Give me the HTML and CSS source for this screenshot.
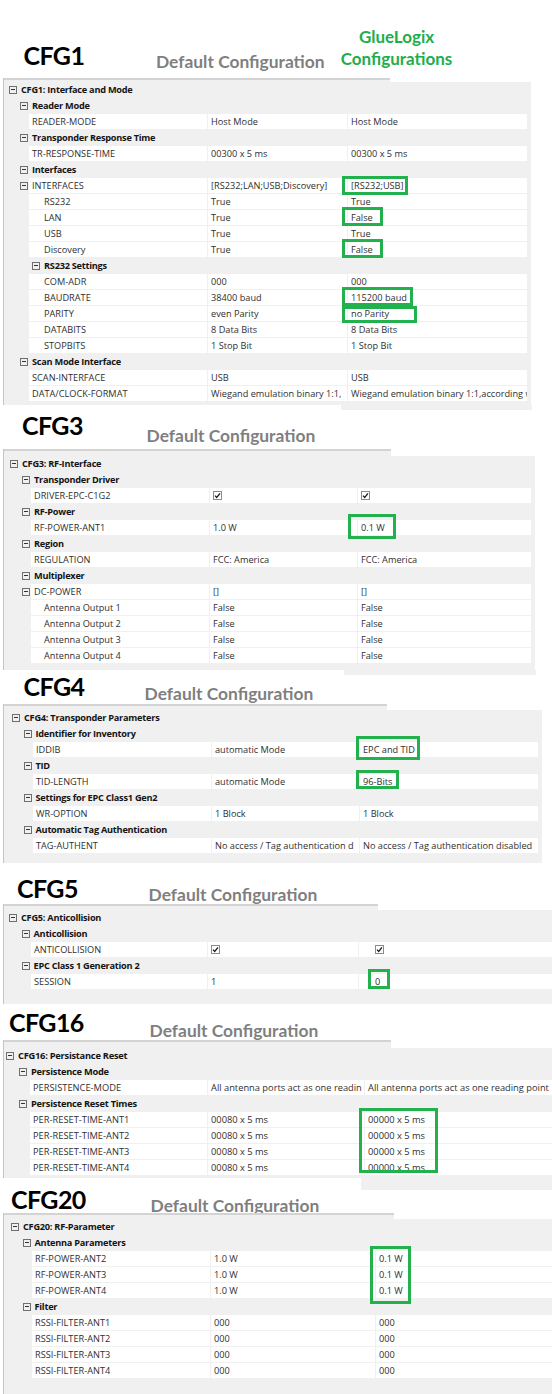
FILE: index.html
```html
<!DOCTYPE html>
<html lang="en">
<head>
<meta charset="utf-8">
<title>CFG comparison</title>
<link rel="stylesheet" href="styles.css">
</head>
<body>

<section class="sec s1">
  <header class="head">
    <h2 class="title">CFG1</h2>
    <p class="sub">Default Configuration</p>
    <p class="glue">GlueLogix<br>Configurations</p>
  </header>
  <div class="panel t1">
    <div class="ptop"><i></i></div>
    <div class="pbody">
      <div class="cat l0"><i class="ex"></i>CFG1: Interface and Mode</div>
      <div class="cat l1"><i class="ex"></i>Reader Mode</div>
      <div class="row"><span class="g"></span><span class="c">READER-MODE</span><span class="c">Host Mode</span><span class="c">Host Mode</span></div>
      <div class="cat l1"><i class="ex"></i>Transponder Response Time</div>
      <div class="row"><span class="g"></span><span class="c">TR-RESPONSE-TIME</span><span class="c">00300 x 5 ms</span><span class="c">00300 x 5 ms</span></div>
      <div class="cat l1"><i class="ex"></i>Interfaces</div>
      <div class="row"><span class="g"><i class="ex"></i></span><span class="c">INTERFACES</span><span class="c">[RS232;LAN;USB;Discovery]</span><span class="c">[RS232;USB]</span><b class="hl b-if"></b></div>
      <div class="row"><span class="g"></span><span class="c in">RS232</span><span class="c">True</span><span class="c">True</span></div>
      <div class="row"><span class="g"></span><span class="c in">LAN</span><span class="c">True</span><span class="c">False</span><b class="hl b-lan"></b></div>
      <div class="row"><span class="g"></span><span class="c in">USB</span><span class="c">True</span><span class="c">True</span></div>
      <div class="row"><span class="g"></span><span class="c in">Discovery</span><span class="c">True</span><span class="c">False</span><b class="hl b-disc"></b></div>
      <div class="cat l2"><i class="ex"></i>RS232 Settings</div>
      <div class="row"><span class="g"></span><span class="c in">COM-ADR</span><span class="c">000</span><span class="c">000</span></div>
      <div class="row"><span class="g"></span><span class="c in">BAUDRATE</span><span class="c">38400 baud</span><span class="c">115200 baud</span><b class="hl b-baud"></b></div>
      <div class="row"><span class="g"></span><span class="c in">PARITY</span><span class="c">even Parity</span><span class="c">no Parity</span><b class="hl b-par"></b></div>
      <div class="row"><span class="g"></span><span class="c in">DATABITS</span><span class="c">8 Data Bits</span><span class="c">8 Data Bits</span></div>
      <div class="row"><span class="g"></span><span class="c in">STOPBITS</span><span class="c">1 Stop Bit</span><span class="c">1 Stop Bit</span></div>
      <div class="cat l1"><i class="ex"></i>Scan Mode Interface</div>
      <div class="row"><span class="g"></span><span class="c">SCAN-INTERFACE</span><span class="c">USB</span><span class="c">USB</span></div>
      <div class="row"><span class="g"></span><span class="c">DATA/CLOCK-FORMAT</span><span class="c">Wiegand emulation binary 1:1,</span><span class="c">Wiegand emulation binary 1:1,according w</span></div>
    </div>
  </div>
</section>

<section class="sec s3">
  <header class="head">
    <h2 class="title">CFG3</h2>
    <p class="sub">Default Configuration</p>
  </header>
  <div class="panel t3">
    <div class="ptop"><i></i></div>
    <div class="pbody">
      <div class="cat l0"><i class="ex"></i>CFG3: RF-Interface</div>
      <div class="cat l1"><i class="ex"></i>Transponder Driver</div>
      <div class="row"><span class="g"></span><span class="c">DRIVER-EPC-C1G2</span><span class="c cb"><svg class="chk" width="9" height="9" viewBox="0 0 9 9"><rect x="0.5" y="0.5" width="8" height="8" fill="#fff" stroke="#8a8a8a"/><path d="M2 4.6 3.7 6.4 7 2.4" fill="none" stroke="#1a1a1a" stroke-width="1.3"/></svg></span><span class="c cb"><svg class="chk" width="9" height="9" viewBox="0 0 9 9"><rect x="0.5" y="0.5" width="8" height="8" fill="#fff" stroke="#8a8a8a"/><path d="M2 4.6 3.7 6.4 7 2.4" fill="none" stroke="#1a1a1a" stroke-width="1.3"/></svg></span></div>
      <div class="cat l1"><i class="ex"></i>RF-Power</div>
      <div class="row"><span class="g"></span><span class="c">RF-POWER-ANT1</span><span class="c">1.0 W</span><span class="c">0.1 W</span><b class="hl b-rf1"></b></div>
      <div class="cat l1"><i class="ex"></i>Region</div>
      <div class="row"><span class="g"></span><span class="c">REGULATION</span><span class="c">FCC: America</span><span class="c">FCC: America</span></div>
      <div class="cat l1"><i class="ex"></i>Multiplexer</div>
      <div class="row"><span class="g"><i class="ex"></i></span><span class="c">DC-POWER</span><span class="c">[]</span><span class="c">[]</span></div>
      <div class="row"><span class="g"></span><span class="c in">Antenna Output 1</span><span class="c">False</span><span class="c">False</span></div>
      <div class="row"><span class="g"></span><span class="c in">Antenna Output 2</span><span class="c">False</span><span class="c">False</span></div>
      <div class="row"><span class="g"></span><span class="c in">Antenna Output 3</span><span class="c">False</span><span class="c">False</span></div>
      <div class="row"><span class="g"></span><span class="c in">Antenna Output 4</span><span class="c">False</span><span class="c">False</span></div>
    </div>
  </div>
</section>

<section class="sec s4">
  <header class="head">
    <h2 class="title">CFG4</h2>
    <p class="sub">Default Configuration</p>
  </header>
  <div class="panel t4">
    <div class="ptop"><i></i></div>
    <div class="pbody">
      <div class="cat l0"><i class="ex"></i>CFG4: Transponder Parameters</div>
      <div class="cat l1"><i class="ex"></i>Identifier for Inventory</div>
      <div class="row"><span class="g"></span><span class="c">IDDIB</span><span class="c">automatic Mode</span><span class="c">EPC and TID</span><b class="hl b-iddib"></b></div>
      <div class="cat l1"><i class="ex"></i>TID</div>
      <div class="row"><span class="g"></span><span class="c">TID-LENGTH</span><span class="c">automatic Mode</span><span class="c">96-Bits</span><b class="hl b-tid"></b></div>
      <div class="cat l1"><i class="ex"></i>Settings for EPC Class1 Gen2</div>
      <div class="row"><span class="g"></span><span class="c">WR-OPTION</span><span class="c">1 Block</span><span class="c">1 Block</span></div>
      <div class="cat l1"><i class="ex"></i>Automatic Tag Authentication</div>
      <div class="row"><span class="g"></span><span class="c">TAG-AUTHENT</span><span class="c">No access / Tag authentication d</span><span class="c">No access / Tag authentication disabled</span></div>
    </div>
  </div>
</section>

<section class="sec s5">
  <header class="head">
    <h2 class="title">CFG5</h2>
    <p class="sub">Default Configuration</p>
  </header>
  <div class="panel t5">
    <div class="ptop"><i></i></div>
    <div class="pbody">
      <div class="cat l0"><i class="ex"></i>CFG5: Anticollision</div>
      <div class="cat l1"><i class="ex"></i>Anticollision</div>
      <div class="row"><span class="g"></span><span class="c">ANTICOLLISION</span><span class="c cb"><svg class="chk" width="9" height="9" viewBox="0 0 9 9"><rect x="0.5" y="0.5" width="8" height="8" fill="#fff" stroke="#8a8a8a"/><path d="M2 4.6 3.7 6.4 7 2.4" fill="none" stroke="#1a1a1a" stroke-width="1.3"/></svg></span><span class="c cb"><svg class="chk" width="9" height="9" viewBox="0 0 9 9"><rect x="0.5" y="0.5" width="8" height="8" fill="#fff" stroke="#8a8a8a"/><path d="M2 4.6 3.7 6.4 7 2.4" fill="none" stroke="#1a1a1a" stroke-width="1.3"/></svg></span></div>
      <div class="cat l1"><i class="ex"></i>EPC Class 1 Generation 2</div>
      <div class="row"><span class="g"></span><span class="c">SESSION</span><span class="c">1</span><span class="c">0</span><b class="hl b-sess"></b></div>
    </div>
  </div>
</section>

<section class="sec s16">
  <header class="head">
    <h2 class="title">CFG16</h2>
    <p class="sub">Default Configuration</p>
  </header>
  <div class="panel t16">
    <div class="ptop"><i></i></div>
    <div class="pbody">
      <div class="cat l0"><i class="ex"></i>CFG16: Persistance Reset</div>
      <div class="cat l1"><i class="ex"></i>Persistence Mode</div>
      <div class="row"><span class="g"></span><span class="c">PERSISTENCE-MODE</span><span class="c">All antenna ports act as one readin</span><span class="c">All antenna ports act as one reading point</span></div>
      <div class="cat l1"><i class="ex"></i>Persistence Reset Times</div>
      <div class="row"><span class="g"></span><span class="c">PER-RESET-TIME-ANT1</span><span class="c">00080 x 5 ms</span><span class="c">00000 x 5 ms</span><b class="hl b-per"></b></div>
      <div class="row"><span class="g"></span><span class="c">PER-RESET-TIME-ANT2</span><span class="c">00080 x 5 ms</span><span class="c">00000 x 5 ms</span></div>
      <div class="row"><span class="g"></span><span class="c">PER-RESET-TIME-ANT3</span><span class="c">00080 x 5 ms</span><span class="c">00000 x 5 ms</span></div>
      <div class="row"><span class="g"></span><span class="c">PER-RESET-TIME-ANT4</span><span class="c">00080 x 5 ms</span><span class="c">00000 x 5 ms</span></div>
    </div>
  </div>
</section>

<section class="sec s20">
  <header class="head">
    <h2 class="title">CFG20</h2>
    <p class="sub">Default Configuration</p>
  </header>
  <div class="panel t20">
    <div class="ptop"><i></i></div>
    <div class="pbody">
      <div class="cat l0"><i class="ex"></i>CFG20: RF-Parameter</div>
      <div class="cat l1"><i class="ex"></i>Antenna Parameters</div>
      <div class="row"><span class="g"></span><span class="c">RF-POWER-ANT2</span><span class="c">1.0 W</span><span class="c">0.1 W</span><b class="hl b-rf2"></b></div>
      <div class="row"><span class="g"></span><span class="c">RF-POWER-ANT3</span><span class="c">1.0 W</span><span class="c">0.1 W</span></div>
      <div class="row"><span class="g"></span><span class="c">RF-POWER-ANT4</span><span class="c">1.0 W</span><span class="c">0.1 W</span></div>
      <div class="cat l1"><i class="ex"></i>Filter</div>
      <div class="row"><span class="g"></span><span class="c">RSSI-FILTER-ANT1</span><span class="c">000</span><span class="c">000</span></div>
      <div class="row"><span class="g"></span><span class="c">RSSI-FILTER-ANT2</span><span class="c">000</span><span class="c">000</span></div>
      <div class="row"><span class="g"></span><span class="c">RSSI-FILTER-ANT3</span><span class="c">000</span><span class="c">000</span></div>
      <div class="row"><span class="g"></span><span class="c">RSSI-FILTER-ANT4</span><span class="c">000</span><span class="c">000</span></div>
    </div>
  </div>
</section>

</body>
</html>
```

FILE: styles.css
```css
* { box-sizing: border-box; margin: 0; padding: 0; }
html, body { background: #fff; }
body {
  width: 552px;
  height: 1394px;
  overflow: hidden;
  font-family: "Open Sans", "Noto Sans", sans-serif;
}

/* ---------- section headers ---------- */
.head {
  display: flex;
  align-items: flex-start;
  height: var(--hh);
  font-family: Lato, "Open Sans", sans-serif;
  font-weight: 700;
}
.title {
  flex: none;
  font-size: 25px;
  line-height: 30px;
  letter-spacing: -0.6px;
  color: #000;
  font-weight: 700;
  margin-left: var(--tx);
  margin-top: var(--ty);
  width: calc(var(--sx) - var(--tx));
}
.sub {
  flex: none;
  font-size: 17.4px;
  line-height: 20px;
  color: #7f7f7f;
  margin-top: var(--sy);
}
.s1 .sub { width: 180.5px; }
.glue {
  flex: none;
  width: 120px;
  margin-top: 25.5px;
  text-align: center;
  font-size: 17px;
  line-height: 22px;
  color: #22ad4b;
}

.s1  { --hh: 78px; --tx: 23.5px; --ty: 40.25px; --sx: 156px;   --sy: 51.5px; }
.s3  { --hh: 44px; --tx: 22px;   --ty: 5.25px;  --sx: 146.6px; --sy: 20.5px; }
.s4  { --hh: 34px; --tx: 23.6px; --ty: 0.75px;  --sx: 144.6px; --sy: 13.5px; }
.s5  { --hh: 41px; --tx: 17px;   --ty: 9.75px;  --sx: 148.6px; --sy: 21.5px; }
.s16 { --hh: 36px; --tx: 9px;    --ty: 3.25px;  --sx: 149.6px; --sy: 16.5px; }
.s20 { --hh: 35px; --tx: 11px;   --ty: 6.25px;  --sx: 150.6px; --sy: 17.5px; }

/* ---------- property grid panels ---------- */
.panel {
  position: relative;
  margin-left: 3px;
  width: var(--pw);
  border-left: 1px solid #c4c4c4;
  font-size: var(--fs, 9.2px);
}
.ptop { height: var(--pt); }
.ptop i {
  display: block;
  width: var(--lw);
  height: 100%;
  background: linear-gradient(#d3d3d3 0 2px, #f0f0f0 2px);
}
.pbody {
  background: #f0f0f0;
  padding-bottom: var(--pb);
}
.t1::after, .t3::after, .t16::after {
  content: "";
  position: absolute;
  top: 100%;
  left: var(--tl);
  width: var(--tw);
  height: var(--th);
  background: #f0f0f0;
}

.t1  { --pw: 528px; --pt: 4px; --lw: 386px; --pb: 3px;
       --m: 25px; --c1: 178px; --c2: 139px; --mr: 4px;
       --x0: 5px; --x1: 16px; --x2: 28px; --in: 15px;
       --tl: 337px; --tw: 191px; --th: 5px; }
.t3  { --pw: 532px; --pt: 7px; --lw: 387px; --pb: 6px;
       --m: 27px; --c1: 178px; --c2: 147px; --mr: 4px;
       --x0: 6px; --x1: 18px; --x2: 30px; --in: 13px;
       --tl: 340px; --tw: 192px; --th: 5px; }
.t4  { --pw: 539px; --pt: 6px; --lw: 383px; --pb: 9px;
       --m: 29px; --c1: 178px; --c2: 147px; --mr: 4px;
       --x0: 8px; --x1: 19.5px; --x2: 31px; --in: 13px; }
.t5  { --pw: 549px; --pt: 6px; --lw: 374px; --pb: 14px;
       --m: 27px; --c1: 176px; --c2: 150px; --mr: 0px;
       --x0: 5px; --x1: 17.5px; --x2: 29px; --in: 13px; }
.t16 { --pw: 549px; --pt: 8px; --lw: 387px; --pb: 2px; --fs: 9.3px;
       --m: 26px; --c1: 177px; --c2: 156px; --mr: 0px;
       --x0: 2px; --x1: 15px; --x2: 27px; --in: 13px;
       --tl: 357px; --tw: 191px; --th: 12px; }
.t20 { --pw: 549px; --pt: 6px; --lw: 390px; --pb: 15px;
       --m: 28px; --c1: 178px; --c2: 164px; --mr: 0px;
       --x0: 7px; --x1: 18.5px; --x2: 30px; --in: 13px; }

/* category rows */
.cat {
  height: 15px;
  margin-bottom: 1px;
  display: flex;
  align-items: center;
  font-weight: 700;
  letter-spacing: -0.25px;
  color: #141414;
  white-space: nowrap;
}
.cat.l0 { padding-left: var(--x0); }
.cat.l1 { padding-left: var(--x1); }
.cat.l2 { padding-left: var(--x2); }

/* expand / collapse box */
.ex {
  flex: none;
  display: block;
  position: relative;
  width: 8px;
  height: 8px;
  border: 1px solid #6f6f6f;
  margin-right: 4px;
}
.ex::after {
  content: "";
  position: absolute;
  left: 1px;
  right: 1px;
  top: 2.5px;
  height: 1px;
  background: #333;
}

/* property rows */
.row {
  position: relative;
  height: 15px;
  margin-bottom: 1px;
  margin-right: var(--mr);
  display: grid;
  grid-template-columns: calc(var(--m) - 1px) var(--c1) var(--c2) 1fr;
  column-gap: 1px;
  color: #2f2f2f;
}
.row .c {
  background: #fff;
  overflow: hidden;
  white-space: nowrap;
  padding-left: 3px;
  line-height: 15px;
}
.row .c.in { padding-left: var(--in); }
.row .g {
  display: flex;
  align-items: center;
  padding-left: var(--x1);
}
.row .c.cb { display: flex; align-items: center; }
.chk { display: block; }
.t5 .row .c:nth-child(4) { padding-left: 16px; }

/* green highlight boxes (annotations over the grid) */
.hl {
  position: absolute;
  z-index: 2;
  border: 3px solid #22b14c;
  pointer-events: none;
}
.b-if   { left: 338px; top: -2px; width: 66px; height: 19px; }
.b-lan  { left: 338px; top: -3px; width: 41px; height: 19px; }
.b-disc { left: 338px; top: -3px; width: 41px; height: 19px; }
.b-baud { left: 338px; top: -3px; width: 71px; height: 19px; }
.b-par  { left: 338px; top: 0;    width: 75px; height: 17px; }
.b-rf1  { left: 344px; top: -6px; width: 48px; height: 25px; }
.b-iddib{ left: 352px; top: -6px; width: 64px; height: 24px; }
.b-tid  { left: 352px; top: -4px; width: 43px; height: 19px; }
.b-sess { left: 364px; top: -5px; width: 22px; height: 20px; }
.b-per  { left: 355px; top: -4px; width: 79px; height: 65px; }
.b-rf2  { left: 366px; top: -5px; width: 41px; height: 58px; }
```
